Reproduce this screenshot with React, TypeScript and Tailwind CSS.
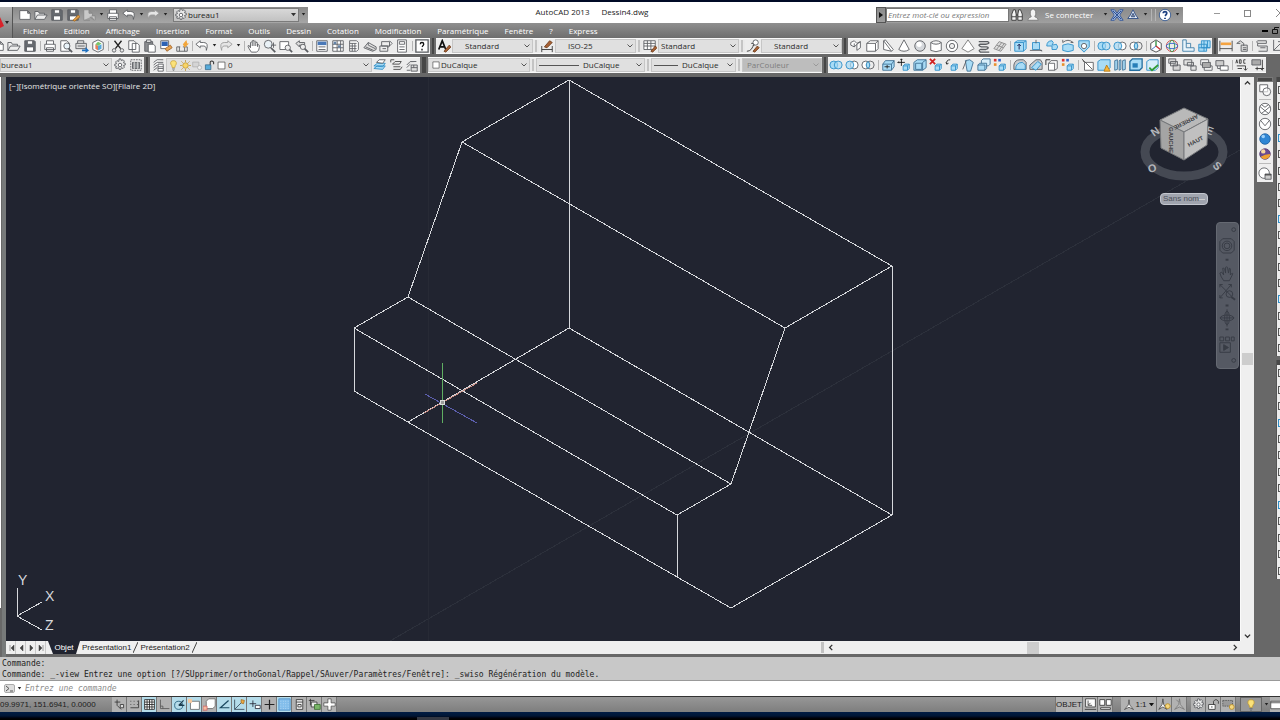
import { ReactNode } from "react";
import { clsx } from "clsx";

const INK = "#5a5d61";
const BLUE = "#2f8fc8";
const SKY = "#a9dcf6";

const miniCube = (
  <path d="M7 9l2-2h5v5l-2 2H7zM7 9h5v5M12 9l2-2" fill={SKY} stroke={BLUE} />
);

// Every glyph is drawn on a 16 x 16 grid
const glyphs: Record<string, ReactNode> = {
  new: <path d="M2 3h9l3 3v7H2zM11 3v3h3" fill="#fff" />,
  open: <path d="M1 13V4h4l1 2h6v2M1 13l3-5h11l-3 5z" fill="#eee" />,
  save: <><path d="M2 2h11l1 1v11H2z" fill="#666a70" /><path d="M5 2h6v4H5zM4 9h8v5H4z" fill="#fff" /></>,
  saveAs: <><path d="M2 2h11l1 1v11H2z" fill="#666a70" /><path d="M5 2h6v4H5zM4 9h8v5H4z" fill="#fff" /><path d="M8 14l6-6 2 2-6 5z" fill="#e2a04a" stroke="#a56a22" /></>,
  sheetOut: <path d="M2 14V2h6l4 4v3M2 14h7M8 2v4h4M9 10l5 4M11 9h4v5" fill="#c9c9c9" stroke="#888" />,
  print: <path d="M4 6V2h8v4M2 6h12v6H2zM4 10h8v4H4z" fill="#fff" />,
  preview: <><path d="M2 2h7l3 3v9H2z" fill="#fff" /><circle cx="9" cy="8" r="3.5" fill="#eaf4fa" /><path d="M11 11l4 4" strokeWidth="2" /></>,
  plot: <><path d="M3 5V2h7v3M1 5h12v6H1zM3 8h8" fill="#ddd" /><path d="M8 12h4v-3l4 4-4 3v-2H8z" fill="#1e70c0" stroke="none" /></>,
  print3d: <><path d="M2 4l6-3 6 3v8l-6 3-6-3z" fill="#fff" /><path d="M8 3l4 2-4 3-3-2z" fill="#7cc36a" stroke="none" /><path d="M5 6l3 2v5l-3-2z" fill="#e57f5a" stroke="none" /><path d="M12 6L8 8v5l4-2z" fill="#57a9dc" stroke="none" /></>,
  cut: <><path d="M4 2l7 9M12 2l-7 9" stroke="#222" strokeWidth="1.5" /><circle cx="3.500" cy="13" r="2" /><circle cx="12.500" cy="13" r="2" /></>,
  copy: <path d="M2 2h6l2 2v8H2zM6 5h6l2 2v8H6z" fill="#fff" />,
  paste: <><path d="M2 3h9v11H2z" fill="#8d8f92" /><path d="M4 1h5v3H4z" fill="#ddd" /><path d="M6 6h6l2 2v7H6z" fill="#fff" /></>,
  match: <><path d="M2 2h9v9H2z" fill="#fff" /><path d="M3 3h7v5H3z" fill="#2c62b4" stroke="none" /><path d="M7 11l6-4 2 3-6 4z" fill="#e8a552" stroke="#a4662c" /></>,
  block: <><path d="M2 9h4M9 9h5v5H2V9M5 9v5M11 9v5" /><path d="M9 6l4-5 1 4h2l-5 5z" fill="#f2a63b" stroke="none" /></>,
  undo: <path d="M6 2L1 6l5 4V8h4q3 0 3 5 3-9-3-9H6z" fill="#fff" />,
  redo: <path d="M10 2l5 4-5 4V8H6q-3 0-3 5-3-9 3-9h4z" fill="#e5e5e5" stroke="#9a9a9a" />,
  pan: <path d="M5 15q-3-4-4-7l1-1 2 3V4q1-1 2 0V2q1-1 2 0v1q1-2 2 0v1q2-1 2 1v2q2-1 2 0v3q0 3-3 5zM6 4v4M8 3v5M10 4v4M12 6v3" fill="#fff" />,
  zoom: <><circle cx="6" cy="6" r="4.500" fill="#eaf2f7" /><path d="M9 10l5 5" strokeWidth="2" /><path d="M12 4v6M9 7h6" /></>,
  zoomWin: <><path d="M1 3h10v9H1z" fill="#fff" /><circle cx="10" cy="10" r="3" fill="#eee" /><path d="M12 12l3 3" strokeWidth="2" /></>,
  zoomPrev: <><path d="M1 5l4-3v2h6v3H5v2z" fill="#ddd" /><circle cx="9" cy="9" r="3" fill="#eee" /><path d="M11 11l4 4" strokeWidth="2" /></>,
  props: <><path d="M2 2h12v12H2z" fill="#fff" /><path d="M3 3h10v4H3z" fill="#4a79b8" stroke="none" /><path d="M4 9h8M4 12h8" /></>,
  center: <><path d="M2 2h12v12H2z" fill="#fff" /><path d="M7 2v12M2 6h12M2 10h12M11 2v12" /><path d="M3 3h3v3H3zM8 7h3v3H8z" fill="#6584a8" stroke="none" /></>,
  palette: <path d="M3 2h8l2 2v8l-2 2H3zM3 5h8M6 5v9M9 5v9M3 8h8M3 11h8" fill="#fff" />,
  sheets: <path d="M1 10l5-6 9 5v3l-4 2zM3 9l9 4M6 4v3l8 4" fill="#ddd" />,
  markup: <path d="M3 3h9v5H3zM1 8h9v6H1zM12 2l3 3-5 5M4 11h4" fill="#eee" />,
  calc: <path d="M3 1h10v14H3zM5 3h6v3H5zM5 9h6M5 12h6" fill="#fff" />,
  help: <><path d="M1 1h14v14H1z" fill="#fff" strokeWidth="1.500" /><path d="M6 6q0-2 2-2t2 2q0 1-2 3M8 11v2" stroke="#111" strokeWidth="1.500" /></>,
  textStyle: <><path d="M2 12L6 2l4 10M4 9h4" stroke="#111" strokeWidth="2" /><path d="M8 14l6-7 2 2-6 6z" fill="#a86135" stroke="#70401f" /></>,
  dimStyle: <><path d="M2 8v7M14 8v7M2 12h12" stroke="#333" /><path d="M5 9l6-7 3 2-6 6z" fill="#a86135" stroke="#70401f" /></>,
  tableStyle: <><path d="M1 2h13v10H1zM1 5h13M1 8h13M5 2v10M9 2v10" fill="#fff" /><path d="M9 14l5-6 2 2-5 5z" fill="#a86135" stroke="#70401f" /></>,
  leader: <><path d="M1 14q6 0 8-9M6 5h3v3" stroke="#333" /><circle cx="11" cy="4" r="3" fill="#fff" /><path d="M8 14l5-6 2 2-5 5z" fill="#a86135" stroke="#70401f" /></>,
  polysolid: <path d="M2 4l4-2 3 3 4-2v7l-4 3V6L6 9 2 7zM6 9V5M9 6l4-3" fill="#fff" />,
  box: <path d="M2 5l4-3h9v9l-3 3H2zM2 5h10v9M12 5l3-3" fill="#fff" />,
  wedge: <path d="M3 2v10l9 2zM3 2l2-1 9 11-2 2" fill="#fff" />,
  cone: <path d="M8 1L2 12q6 4 12 0z" fill="#fff" />,
  sphere: <><circle cx="8" cy="8" r="6" fill="#d5d8dc" /><circle cx="7" cy="6" r="3" fill="#fff" stroke="none" /></>,
  cylinder: <path d="M2 4v9q6 3 12 0V4M2 4q6-4 12 0-6 4-12 0" fill="#fff" />,
  torus: <><circle cx="8" cy="8" r="6.500" fill="#fff" /><circle cx="8" cy="8" r="3" fill="#eee" /></>,
  pyramid: <path d="M8 1L1 11l7 4 7-4z" fill="#fff" stroke="#777" />,
  helix: <path d="M2 3h10q4 2-2 3H4q-4 1 1 3h6q4 1-1 3H4q-3 1 0 3h10" strokeWidth="1.500" />,
  plane: <path d="M1 11l6-8 8 3-6 8zM4 7l8 3M10 4l-6 8M13 5l-6 8" fill="#ddd" stroke="#888" />,
  pull: <><path d="M2 4l3-2h10v9l-3 3H2zM2 4h10v10M12 4l3-2" fill={SKY} stroke={BLUE} /><path d="M7 12V6M5 8l2-2 2 2" stroke="#114" /></>,
  extrude: <><path d="M4 4h8v8H4z" fill={SKY} stroke={BLUE} /><path d="M1 13h14M8 1v4M12 12l3 2" /></>,
  sweep: <path d="M2 8q0-6 6-6 3 2 0 5l5-1q3 3 0 6H8V8z" fill={SKY} stroke={BLUE} />,
  revolve: <><path d="M2 7q6-3 12 0v6q-6 3-12 0z" fill={SKY} stroke={BLUE} /><path d="M2 4q6-5 12 0M2 4V1M14 4h-3" /></>,
  loft: <><path d="M2 2h12v7l-6 6-6-6z" fill={SKY} stroke={BLUE} /><circle cx="8" cy="8" r="3" fill="#fff" /></>,
  union: <><circle cx="5.500" cy="8" r="4.500" fill={SKY} stroke={BLUE} /><circle cx="10.500" cy="8" r="4.500" fill={SKY} fillOpacity=".6" stroke={BLUE} /></>,
  subtract: <><circle cx="10.500" cy="8" r="4.500" fill="#fff" /><circle cx="5.500" cy="8" r="4.500" fill={SKY} fillOpacity=".7" stroke={BLUE} /></>,
  intersect: <><circle cx="5.500" cy="8" r="4.500" fill="#fff" /><circle cx="10.500" cy="8" r="4.500" /><path d="M8 4q4 4 0 8-4-4 0-8" fill={SKY} stroke={BLUE} /></>,
  gizmo: <><path d="M2 5l6-4 6 4v7l-6 3-6-3z" fill="#fff" stroke="#444" /><path d="M8 8V2" stroke="#2c8f3c" strokeWidth="1.500" /><path d="M8 8l-5 4" stroke="#2a66c8" /><path d="M8 8l5 4" stroke="#c62f2f" strokeWidth="1.500" /></>,
  globe: <><circle cx="8" cy="8" r="6.500" stroke="#c44" /><ellipse cx="8" cy="8" rx="3" ry="6.500" stroke="#3a9a4c" /><ellipse cx="8" cy="8" rx="6.500" ry="3" stroke="#36c" /></>,
  align: <path d="M2 1h4v9h9v4H2zM6 5h5v5" fill="#e7f4fb" stroke="#3f7da6" />,
  array: <path d="M5 2h10v8H5zM2 6h9v8H2zM8 2v12M2 10h13M12 2v8" fill={SKY} stroke={BLUE} />,
  dim: <><path d="M1 2v12M15 2v12M1 11h14" stroke="#444" /><path d="M2 4h12v3H2z" fill="#f4a340" stroke="none" /></>,
  tag: <path d="M2 5l4-3 4 3v3M2 5h4M7 7h7v7H7zM9 10h4M9 12h4" fill="#ddd" />,
  scroll: <path d="M3 2h10v3H3v3h11v6H4M6 10h6M3 2q-2 1 0 3" fill="#e5e5e5" />,
  axes: <path d="M3 1v12h12M3 13L13 3M8 3h5v5" />,
  faceMove: <>{miniCube}<path d="M5 1v8M1 5h8M4 2l1-1 1 1M2 4L1 5l1 1" stroke="#111" /></>,
  faceExtrude: <><path d="M2 7l3-4h10v7l-3 4H2zM2 7h10v7M12 7l3-4" fill={SKY} stroke="#3e6f92" /><path d="M4 10h6M7 8v4" stroke="#222" /></>,
  faceOffset: <path d="M1 5l4-3h10v9l-4 3H1zM3 6h7v7H3zM11 5l4-3M11 5v9" fill={SKY} stroke="#3e6f92" />,
  faceDelete: <>{miniCube}<path d="M1 1l6 6M7 1L1 7" stroke="#d02020" strokeWidth="2" /></>,
  faceRotate: <>{miniCube}<path d="M6 2Q1 2 2 7l2-1M2 7L1 5" stroke="#222" /></>,
  faceTaper: <><path d="M5 3l5-1 4 3-3 10H7z" fill={SKY} stroke="#3e6f92" /><path d="M2 13L6 3" /></>,
  faceCopy: <><path d="M5 3l2-2h8v6l-2 2H5z" fill="#d7eefa" stroke="#3e6f92" /><path d="M1 8l2-2h8v6l-2 2H1zM1 8h8v6" fill={SKY} stroke="#3e6f92" /></>,
  faceColor: <>{miniCube}<path d="M1 1h3v3H1z" fill="#d33" stroke="none" /><path d="M6 1h3v3H6z" fill="#36c" stroke="none" /><path d="M1 6h3v3H1z" fill="#e8902c" stroke="none" /></>,
  fillet: <><path d="M1 13V8q1-6 7-6h4l3 3v8z" fill="#c8ccd0" /><path d="M3 13q0-8 8-8l3 3v5z" fill={SKY} stroke={BLUE} /></>,
  chamfer: <><path d="M1 13V8l7-6h5l2 3v8z" fill="#c8ccd0" /><path d="M3 11l7-7 4 3-6 7z" fill={SKY} stroke={BLUE} /></>,
  edgeCopy: <><path d="M4 6l3-3h7v9l-3 2H4zM4 6h7v8" fill="#fff" /><path d="M1 2v6M1 2h5" stroke="#222" /></>,
  imprint: <><path d="M4 5h10v9H4z" fill="#fff" /><path d="M1 1l12 12M4 5l-2-2" stroke="#555" /></>,
  clean: <><path d="M1 4l3-2h11v9l-3 3H1z" fill={SKY} stroke={BLUE} /><path d="M11 8l4 7H8z" fill="#f7b53b" stroke="#b87a14" /></>,
  separate: <path d="M2 3l3-1v11l-3 1zM7 3l2-1v11l-2 1zM11 3l3-1v11l-3 1z" fill={SKY} stroke="#3e6f92" />,
  shell: <><path d="M1 4l3-3h11v10l-3 3H1z" fill={SKY} stroke="#256fa0" strokeWidth="1.500" /><path d="M4 6h6v5H4z" fill="#287fb8" stroke="none" /></>,
  check: <><path d="M2 4l3-2h10v9l-3 3H2z" fill="#d7eefa" stroke={BLUE} /><path d="M5 11l3 3 7-6" stroke="#2f9a35" strokeWidth="2" /></>,
  front: <path d="M2 1h8v5H2zM4 4h8v5H4zM7 8h8v6H7z" fill="#d6d6d6" />,
  back: <path d="M1 2h9v6H1zM5 5h7v4H5zM9 9h6v5H9z" fill="#e2e2e2" />,
  above: <><path d="M2 2h9v6H2zM6 9h9v5H6z" fill="#fff" /><path d="M4 5h9v6H4z" fill="#aaa" /></>,
  under: <><path d="M1 3h9v6H1z" fill="#ccc" /><path d="M6 9h9v5H6zM3 9v3h3" fill="#fff" /></>,
  letters: <path d="M1 6l1-4 1 4M5 2v4h2V2zM12 2h-2v4h2M2 9h10v5M10 12l2 2 2-2M3 12h5" stroke="#333" />,
  dimFront: <><path d="M1 2h10v6H1z" fill="#aaa" /><path d="M13 2v12M5 12h10M7 10v4M11 12l2 2" stroke="#333" /></>,
  gear: <><path d="M7 1h2l.5 2 2-1 1.500 1.500-1 2 2 .5v2l-2 .5 1 2-1.500 1.500-2-1-.5 2H7l-.5-2-2 1L3 11.500l1-2-2-.5V7l2-.5-1-2L4.500 3l2 1z" fill="#e8e8e8" /><circle cx="8" cy="8" r="2" fill="#fff" /></>,
  gearGrid: <><path d="M2 2h12v12H2z" strokeDasharray="2 1" /><path d="M4 5h8v7H4z" fill="#8a8d90" /><path d="M6 3v10M10 3v10" stroke="#ddd" /></>,
  layers: <path d="M3 5l4-3h7M3 8l4-3h7M3 11l4-3M3 14l4-3M8 7h6v8H8zM8 10h6M8 12h6" fill="#fff" />,
  layerSet: <><path d="M1 9l4-3h9l-3 4zM1 12l4-3h9l-3 4z" fill={SKY} stroke={BLUE} /><path d="M4 5l3-3h7l-3 4z" fill="#fff" /></>,
  layerPrev: <path d="M2 2h4M2 2v3M4 7l3-3h7l-2 3zM5 10h8M5 13h8l2-3" stroke="#444" fill="#eee" />,
  layerState: <path d="M2 8l4-4h7M2 11l4-4M2 14h4M7 8h7v7H7zM7 11h7M10 8v3" fill="#ddd" />,
  bulb: <><path d="M8 1q5 0 4 5-2 2-2 5H6q0-3-2-5-1-5 4-5z" fill="#fbe27a" stroke="#c39a2c" /><path d="M6 13h4M7 15h2" /></>,
  sun: <><circle cx="8" cy="8" r="4" fill="#f8d568" stroke="#b98c20" /><path d="M8 0v3M8 13v3M0 8h3M13 8h3M2 2l2 2M12 12l2 2M14 2l-2 2M4 12l-2 2" stroke="#b98c20" /></>,
  vpFreeze: <><path d="M1 3h9v7H1z" fill="#d5d5d5" stroke="#aaa" /><circle cx="11" cy="11" r="3" fill="#eee" stroke="#a8a8a8" /></>,
  unlock: <><path d="M2 7h8v7H2z" fill="#58abd9" stroke="#2c5f80" /><path d="M9 7V3q2-3 5 0v3" stroke="#333" strokeWidth="1.500" /></>,
  swatch: <path d="M3 3h10v10H3z" fill="#fff" stroke="#444" />,
  binoc: <path d="M2 14V7l2-5h2l1 5v7zM9 14V7l1-5h2l2 5v7zM7 8h2M2 10h5M9 10h5" fill="#f4f4f4" stroke="#333" />,
  user: <path d="M2 14q0-3 4-4Q4 7 5 4q1-3 3-3t3 3q1 3-1 6 4 1 4 4z" fill="#f2f2f2" stroke="#777" />,
  exchange: <><path d="M1 2h4l3 4 3-4h4l-4 6 4 6h-4l-3-4-3 4H1l4-6z" fill="#dce8f8" stroke="#234a94" /><path d="M3 3l10 10M13 3L3 13" stroke="#234a94" strokeWidth="1.500" /></>,
  a360: <path d="M8 2l3 6 3 4H2l3-4zM8 6l-2 4h4z" fill="#e5ecf6" stroke="#2c4c84" />,
  ask: <><circle cx="8" cy="8" r="6.500" fill="#fff" stroke="#31568e" /><path d="M6 6q0-2 2-2t2 2q0 1-2 3M8 11v1.500" stroke="#1b3f80" strokeWidth="2" /></>,
  hide: <><path d="M2 2h9v8H2z" fill="#fff" /><circle cx="10" cy="10" r="4.500" fill="#fff" fillOpacity=".6" /></>,
  wire: <><circle cx="8" cy="8" r="6.500" fill="#fff" /><path d="M2 5l6 5 6-5M4 13l4-3 4 3M4 3l4 3 4-3" /></>,
  hidden: <><circle cx="8" cy="8" r="6.500" fill="#fff" /><path d="M3 4l5 6 5-6" /></>,
  blueBall: <><circle cx="8" cy="8" r="6" fill="#2f86d4" stroke="#1f62a4" /><circle cx="6" cy="5" r="2" fill="#9bd0fa" stroke="none" /></>,
  goldBall: <><circle cx="8" cy="8" r="6" fill="#6a4a92" stroke="#53396f" /><path d="M3 11Q8 8 14 8q0 5-6 6-3 0-5-3z" fill="#f0a030" stroke="none" /><circle cx="6" cy="5" r="2.500" fill="#f6d6a0" stroke="none" /></>,
  styles: <><circle cx="7" cy="7" r="6" fill="#fff" /><path d="M8 8h7v6H8z" fill="#ccc" /><path d="M8 9h7" stroke="#222" /></>,
  infer: <path d="M5 2v7M2 5h7M9 8h4v4H9zM5 9l5 5" stroke="#333" fill="#ddd" />,
  snap: <path d="M3 4h1M7 4h1M11 4h1M3 8h1M7 8h1M11 8h1M3 12h10M13 3v9" stroke="#333" />,
  grid: <path d="M2 2h12v12H2zM5 2v12M8 2v12M11 2v12M2 5h12M2 8h12M2 11h12" stroke="#222" fill="#fff" />,
  ortho: <path d="M3 2v11h11M3 10h3v3" stroke="#555" />,
  polar: <><circle cx="7" cy="9" r="5" stroke="#1d5a78" /><path d="M7 9h7M7 9l6-6M9 6l2 3" stroke="#1d3d50" strokeWidth="1.500" /></>,
  osnap: <><path d="M3 4h11v10H3z" fill="#fff" stroke="#666" /><path d="M0 1h5v5H0z" fill="#f4c9a0" stroke="none" /></>,
  osnap3: <><path d="M4 4l3-3h8v9l-3 3H4z" fill="#fff" stroke="#666" /><path d="M0 10h5v5H0z" fill="#f4b9a0" stroke="#c66" /></>,
  otrack: <path d="M13 3L3 12h11" stroke="#1d4a60" strokeWidth="1.500" />,
  ducs: <><path d="M2 2v12h12M2 14l9-9" stroke="#345" /><path d="M10 2l4 1-1 4-3-1z" fill="#f3ad45" stroke="#a66e1e" /></>,
  dyn: <path d="M6 3v8M2 7h8M9 9h6v4H9z" stroke="#223" fill="#fff" />,
  lwt: <path d="M8 2v12M2 8h12" stroke="#222" strokeWidth="1.500" />,
  tpy: <><path d="M1 1h14v14H1z" fill="#82bdeb" stroke="#4f8fc4" /><path d="M3 4h10M3 7h10M3 10h10M3 13h10" stroke="#c6e2f8" strokeDasharray="1 2" /></>,
  qp: <path d="M4 2h8v12H4zM4 5h8M6 8h4v3H6z" fill="#eee" stroke="#333" />,
  sc: <><path d="M1 3h7M3 1v8M4 5h7v6H4z" stroke="#333" fill="#eee" /><path d="M8 8h7v6H8z" fill="#79b568" stroke="#3c6f33" /></>,
  am: <path d="M6 1h4v5h5v4h-5v5H6v-5H1V6h5z" fill="#fff" stroke="#555" />,
  model: <><path d="M2 1h12v10H2z" fill="#fff" stroke="#333" /><path d="M5 3v6h5M5 9l3-3M1 14h14" stroke="#333" /></>,
  views: <path d="M1 2h6v7H1zM9 2h6v7H9zM2 12h12v2H2z" fill="#fff" stroke="#333" />,
  scale: <path d="M8 1L7 8l-5 6 6-3 6 3-5-6z" fill="#fff" stroke="#444" />,
  scaleLit: <><path d="M6 1L5 8l-4 6 5-3 5 3-4-6z" fill="#fff" stroke="#444" /><circle cx="12" cy="10" r="3" fill="#f5d780" stroke="#b98c20" /></>,
  scaleOff: <path d="M8 1L7 8l-5 6 6-3 6 3-5-6zM4 2l3 3" fill="#bbb" stroke="#777" />,
  padlock: <><path d="M2 8h8v6H2z" fill="#fff" stroke="#333" /><path d="M8 8V4q3-4 6 0v3M6 10v2" stroke="#333" /></>,
  hardware: <><path d="M1 3h12v7H1z" fill="#999" stroke="#555" strokeDasharray="2 1" /><circle cx="12" cy="11" r="3" fill="#f5d780" stroke="#b98c20" /></>,
  tray: <path d="M1 3h14v10H1zM1 5h14" fill="#fff" stroke="#333" />,
};

const Glyph = ({ name, className = "size-3.5" }: { name: string; className?: string }) => (
  <svg viewBox="0 0 16 16" fill="none" stroke={INK} strokeWidth="1" className={clsx("shrink-0", className)} aria-hidden="true">
    {glyphs[name]}
  </svg>
);

const Tool = ({ name, className }: { name: string; className?: string }) => (
  <button aria-label={name} className={clsx("flex w-4 shrink-0 items-center justify-center overflow-hidden", className)}>
    <Glyph name={name} />
  </button>
);

const Caret = ({ className = "w-2" }: { className?: string }) => (
  <button aria-label="options" className={clsx("flex shrink-0 items-center justify-center", className)}>
    <svg viewBox="0 0 6 4" className="w-[5px]" aria-hidden="true"><path d="M1 0h4L3 3z" fill="#222" /></svg>
  </button>
);

// "|" is a divider, "v" is a small drop-down arrow
const Tools = ({ items }: { items: string }) => (
  <>
    {items.split(" ").map((item, i) =>
      item === "|" ? (
        <span key={i} className="flex w-1 shrink-0 justify-center py-0.5"><span className="w-px bg-[#b5b5b5]" /></span>
      ) : item === "v" ? (
        <Caret key={i} />
      ) : (
        <Tool key={i} name={item} />
      )
    )}
  </>
);

const Bar = ({ children }: { children: ReactNode }) => (
  <div className="flex h-4 shrink-0 items-stretch border-y border-[#fafafa] bg-[#ececec]">{children}</div>
);

const Grip = ({ className = "w-1.5" }: { className?: string }) => (
  <span className={clsx("shrink-0 border-x-2 border-[#6c6c6c] bg-[#464646]", className)} />
);

const Rule = () => <span className="my-px w-1.5 shrink-0 border-x-2 border-[#e9e9e9] bg-[#c4c4c4]" />;

interface ComboProps {
  label: string;
  value: string;
  className: string;
  pad?: string;
  lead?: ReactNode;
  disabled?: boolean;
}

function Combo({ label, value, className, pad = "pl-1", lead, disabled }: ComboProps) {
  return (
    <label
      className={clsx(
        "relative flex shrink-0 items-center border border-[#c6c6c6]",
        disabled ? "bg-[#bdbdbd] text-[#7d7d7d]" : "bg-[#e0e0e0] text-[#2b2b2b]",
        pad,
        className
      )}
    >
      {lead}
      <select aria-label={label} disabled={disabled} className="w-full min-w-0 flex-1 appearance-none bg-transparent opacity-100 outline-none">
        <option>{value}</option>
      </select>
      <svg viewBox="0 0 6 4" className="pointer-events-none absolute right-0.5 w-1.5" fill="none" stroke={disabled ? "#999" : "#555"} aria-hidden="true">
        <path d="M.5.5L3 3 5.500.5" />
      </svg>
    </label>
  );
}

const menus = ["Fichier", "Edition", "Affichage", "Insertion", "Format", "Outils", "Dessin", "Cotation", "Modification", "Paramétrique", "Fenêtre", "?", "Express"];

function Header() {
  return (
    <header className="flex shrink-0 bg-white">
      <button aria-label="Application" className="mt-[5px] flex w-[13px] shrink-0 items-center justify-between border-r border-[#555] bg-gradient-to-b from-[#b4b4b4] to-[#7b7b7b]">
        <svg viewBox="0 0 4 12" className="h-3 w-1" aria-hidden="true"><path d="M0 0l4 9-4 2z" fill="#d9222a" /></svg>
        <svg viewBox="0 0 6 4" className="mr-0.5 w-1.5" aria-hidden="true"><path d="M1 0h4L3 3z" fill="#222" /></svg>
      </button>
      <div className="min-w-0 flex-1">
        <div className="flex h-[21px] items-stretch overflow-hidden pt-[5px]">
          <div className="flex w-[295px] shrink-0 items-stretch bg-gradient-to-b from-[#8a8a8a] to-[#a6a6a6] pl-1">
            <Tools items="new open save saveAs sheetOut v" />
            <Tools items="print undo v redo v" />
            <label className="relative my-px ml-1 flex w-[126px] items-center border border-[#7b7b7b] bg-gradient-to-b from-[#d8d8d8] to-[#c2c2c2] text-[#222]">
              <Glyph name="gear" />
              <select aria-label="Espace de travail" className="min-w-0 flex-1 appearance-none bg-transparent outline-none"><option>bureau1</option></select>
              <svg viewBox="0 0 6 4" className="pointer-events-none absolute right-0.5 w-[5px]" aria-hidden="true"><path d="M0 0h6L3 4z" fill="#333" /></svg>
            </label>
            <Caret className="flex-1" />
          </div>
          <h1 className="flex flex-1 items-center justify-center gap-3 pb-1.5 text-[#222]">
            <span>AutoCAD 2013</span>
            <span>Dessin4.dwg</span>
          </h1>
          <div className="flex w-[404px] shrink-0 items-stretch">
            <div className="flex w-[307px] items-stretch bg-gradient-to-b from-[#8a8a8a] to-[#9f9f9f]">
              <button aria-label="Réduire" className="flex w-[10px] items-center justify-center border border-[#555]">
                <svg viewBox="0 0 4 6" className="h-1.5" aria-hidden="true"><path d="M0 0l4 3-4 3z" fill="#111" /></svg>
              </button>
              <input aria-label="Rechercher" placeholder="Entrez mot-clé ou expression" className="my-px w-[123px] border border-[#777] bg-white px-px italic outline-none placeholder:text-[#777]" />
              <Tools items="binoc user" />
              <button className="pl-1 text-white">Se connecter</button>
              <span className="flex-1" />
              <Caret />
              <Tools items="exchange a360 v | | ask v" />
              <span className="w-0.5" />
            </div>
            <div className="flex flex-1 items-start justify-end text-[#888]">
              <button aria-label="Minimiser" className="flex h-3 w-[31px] items-center justify-center"><span className="h-px w-1.5 bg-[#999]" /></button>
              <button aria-label="Agrandir" className="flex h-3 w-[31px] items-center justify-center"><span className="size-[7px] border border-[#888]" /></button>
              <button aria-label="Fermer" className="flex h-3 w-[17px] items-center justify-end"><svg viewBox="0 0 5 8" className="h-2 w-[5px]" fill="none" stroke="#888" aria-hidden="true"><path d="M1 0l4 4-4 4" /></svg></button>
            </div>
          </div>
        </div>
        <nav className="flex h-[15px] items-center bg-gradient-to-b from-[#8f8f8f] to-[#6e6e6e] pl-0.5 text-white">
          {menus.map((m) => (
            <button key={m} className="px-2">{m}</button>
          ))}
          <span className="flex-1" />
          <button aria-label="Minimiser le dessin" className="mr-1 h-0.5 w-1.5 bg-black" />
          <button aria-label="Restaurer le dessin" className="mr-px">
            <svg viewBox="0 0 7 7" className="size-[7px]" fill="none" stroke="#111" aria-hidden="true"><path d="M2.500 2V.5H7M.5 2.500h5v4h-5z" /></svg>
          </button>
        </nav>
      </div>
    </header>
  );
}

function Toolbars() {
  return (
    <div className="flex shrink-0 flex-col gap-[3px] overflow-hidden bg-[#686868] pb-1">
      <div className="flex">
        <Bar>
          <span className="flex w-1.5 shrink-0 justify-end overflow-hidden"><Tool name="new" /></span>
          <Tools items="open save | print preview plot print3d | cut copy paste match block | undo v redo v | pan zoom zoomWin zoomPrev | props center palette sheets markup calc | help" />
        </Bar>
        <Grip />
        <Bar>
          <Tool name="textStyle" />
          <Combo label="Style de texte" value="Standard" className="w-[81px]" pad="pl-3" />
          <Rule />
          <Tool name="dimStyle" />
          <Combo label="Style de cote" value="ISO-25" className="w-[81px]" pad="pl-3" />
          <Rule />
          <Tool name="tableStyle" />
          <Combo label="Style de tableau" value="Standard" className="w-[81px]" pad="pl-0.5" />
          <Rule />
          <Tool name="leader" />
          <Combo label="Style de ligne de repère" value="Standard" className="w-[81px]" pad="pl-3" />
        </Bar>
        <Grip />
        <Bar>
          <Tools items="polysolid box wedge cone sphere cylinder torus pyramid helix plane | pull extrude sweep revolve loft | union subtract intersect | gizmo globe align array" />
        </Bar>
        <Grip />
        <Bar>
          <Tools items="dim tag | scroll axes" />
        </Bar>
      </div>
      <div className="flex">
        <Bar>
          <Combo label="Espace" value="bureau1" className="w-28" pad="pl-0" />
          <Tools items="gear gearGrid" />
        </Bar>
        <Grip />
        <Bar>
          <Tool name="layers" />
          <Combo
            label="Calque"
            value="0"
            className="w-[206px]"
            pad="pl-px"
            lead={["bulb", "sun", "vpFreeze", "unlock", "swatch"].map((n) => <Glyph key={n} name={n} className="mr-px size-[11px]" />)}
          />
          <Tools items="layerSet layerPrev layerState" />
        </Bar>
        <Grip className="w-2" />
        <Bar>
          <Combo label="Couleur" value="DuCalque" className="w-[102px]" pad="pl-0.5" lead={<Glyph name="swatch" className="size-[10px]" />} />
          <Rule />
          <Combo label="Type de ligne" value="DuCalque" className="w-[109px]" pad="pl-0.5" lead={<span className="mr-1 h-px w-10 shrink-0 bg-[#555]" />} />
          <Rule />
          <Combo label="Epaisseur de ligne" value="DuCalque" className="w-[85px]" pad="pl-0.5" lead={<span className="mr-1 h-px w-6 shrink-0 bg-[#555]" />} />
          <Rule />
          <Combo label="Style de tracé" value="ParCouleur" className="w-20" disabled />
        </Bar>
        <Grip />
        <Bar>
          <Tools items="union subtract intersect | faceExtrude faceMove faceOffset faceDelete faceRotate faceTaper faceCopy faceColor | fillet chamfer edgeCopy faceColor | imprint clean separate shell check" />
        </Bar>
        <Grip />
        <Bar>
          <Tools items="front back above under | letters dimFront" />
        </Bar>
      </div>
    </div>
  );
}

function Model() {
  return (
    <svg className="absolute inset-0 size-full" fill="none" shapeRendering="crispEdges" aria-hidden="true">
      <path d="M1234 73L384 564" stroke="#2c303b" />
      <path d="M422.500 0v564" stroke="#272a35" />
      <g stroke="#d6d8dc">
        <path d="M563 3L456 65 402 220l-54 31v63l377 217 161-93V189z" />
        <path d="M456 65l323 186 107-62M779 251l-54 156-54 31v62M402 220l323 187M348 251l323 187" />
        <path d="M563.500 3v248M402 345l161-94 323 187" />
      </g>
      <path d="M418 336l53-30" stroke="#c98f86" />
      <path d="M419 317l52 29" stroke="#5c5fae" />
      <path d="M436.500 286v60" stroke="#5fae62" />
      <path d="M434.500 323.500h4v4h-4z" fill="#9a9a9a" stroke="#ddd" />
      <path d="M11.500 511v28M11 539l25-14M11 539l25 14" stroke="#d6d8dc" />
      <g fill="#d6d8dc" className="font-['Liberation_Sans'] text-[14px]">
        <text x="12" y="508">Y</text>
        <text x="39" y="524">X</text>
        <text x="39" y="553">Z</text>
      </g>
    </svg>
  );
}

function ViewCube() {
  return (
    <svg viewBox="0 0 92 76" className="absolute top-7 right-2.5 h-[76px] w-[92px]" aria-hidden="true">
      <ellipse cx="46" cy="47" rx="39" ry="24" fill="none" stroke="#454953" strokeWidth="9" />
      <g fill="#b4b6bb" className="font-['Liberation_Sans'] text-[11px] font-bold">
        <text transform="translate(11 68) rotate(-15)">O</text>
        <text transform="translate(74 61) rotate(45)">S</text>
        <text transform="translate(16 32) rotate(-35)">N</text>
        <text transform="translate(67 28) rotate(20)">E</text>
      </g>
      <g stroke="#77797c">
        <path d="M46 3l24 11-24 13L22 15z" fill="#b9b9b9" />
        <path d="M22 15l24 12v28L23 43z" fill="#a4a4a4" />
        <path d="M70 14L46 27v28l23-15z" fill="#c0c0c0" />
      </g>
      <g fill="#3f4145" className="font-['Liberation_Sans'] text-[6px] font-bold">
        <text transform="translate(59 9) rotate(153)">ARRIERE</text>
        <text transform="translate(31 22) rotate(90)">GAUCHE</text>
        <text transform="translate(51 42) rotate(-27)">HAUT</text>
      </g>
    </svg>
  );
}

function NavBar() {
  return (
    <div className="absolute top-[145px] right-px w-[23px] rounded-sm border border-[#656972] bg-[#555963]">
      <svg viewBox="0 0 22 145" className="h-[145px] w-full" fill="none" stroke="#383c45" aria-hidden="true">
        <circle cx="17.500" cy="3.500" r="2" />
        <path d="M6 13h9l3 3v9l-3 3H6l-3-3v-9z" />
        <circle cx="10.500" cy="20.500" r="5" /><circle cx="10.500" cy="20.500" r="3" />
        <path d="M9 35h3M9 83h3M9 108h3" strokeWidth="2" />
        <path d="M7 57q-3-4-4-8l2-1 2 3-1-7q1-1 2 1l1 4V43q1-1 2 0l1 6 1-5q1 0 1 1v6l2-2q1 0 0 2l-3 6z" />
        <path d="M3 61l12 12M15 61L3 75M3 64v-3h3M15 64v-3h-3M3 72v3h3" />
        <circle cx="13" cy="71" r="3.500" /><path d="M15 74l4 3" strokeWidth="2" />
        <ellipse cx="10.500" cy="96" rx="7" ry="3" /><ellipse cx="10.500" cy="96" rx="2.500" ry="7" /><path d="M10.500 87v18M3 96h15" />
        <path d="M3 116h4v4H3zM9 116h4v4H9zM15 116h3v4h-3zM3 122h11v10H3z" /><path d="M7 124v6l5-3z" fill="#383c45" />
        <circle cx="17.500" cy="140.500" r="2" />
      </svg>
    </div>
  );
}

const Chevron = ({ d, label }: { d: string; label: string }) => (
  <button aria-label={label} className="flex h-3 w-3 shrink-0 items-center justify-center">
    <svg viewBox="0 0 8 8" className="size-[7px]" fill="none" stroke="#333" strokeWidth="1.500" aria-hidden="true"><path d={d} /></svg>
  </button>
);

function SheetTabs() {
  return (
    <div className="flex h-[13px] shrink-0 items-stretch bg-[#efefef] font-['Liberation_Sans'] text-[8px] text-[#222]">
      <div className="flex w-[815px] shrink items-stretch">
        {["M3 1v6M7 1L4 4l3 3z", "M6 1L3 4l3 3z", "M3 1l3 3-3 3z", "M6 1v6M2 1l3 3-3 3z"].map((d) => (
          <button key={d} aria-label="onglets" className="flex w-[10px] items-center justify-center border-r border-[#c9c9c9]">
            <svg viewBox="0 0 8 8" className="size-2" fill="#444" stroke="#444" strokeWidth=".5" aria-hidden="true"><path d={d} /></svg>
          </button>
        ))}
        <button className="relative ml-0.5 flex w-8 items-center justify-center text-white">
          <svg viewBox="0 0 32 13" preserveAspectRatio="none" className="absolute inset-0 size-full" aria-hidden="true"><path d="M0 0h32l-4 13H5z" fill="#212430" /></svg>
          <span className="relative">Objet</span>
        </button>
        {["Présentation1", "Présentation2"].map((t) => (
          <button key={t} className="flex items-center gap-0.5 pl-0.5">
            {t}
            <svg viewBox="0 0 5 11" className="h-[11px] w-[5px]" stroke="#444" aria-hidden="true"><path d="M0 11L5 0" /></svg>
          </button>
        ))}
      </div>
      <span className="my-px w-[3px] bg-[#c2c2c2]" />
      <Chevron label="gauche" d="M6 1L3 4l3 3" />
      <div className="flex flex-1 justify-center pt-px"><span className="w-3 bg-[#cdcdcd]" /></div>
      <Chevron label="droite" d="M2 1l3 3-3 3" />
      <span className="w-[13px]" />
    </div>
  );
}

// Tool strip cut off by the window edge
const EdgeStrip = ({ count, className }: { count: number; className?: string }) => (
  <div className={clsx("flex flex-col border-l border-[#555] bg-[#ececec]", className)}>
    <span className="h-[5px] bg-[#484848]" />
    <div className="flex flex-1 flex-col items-end justify-around">
      {Array.from({ length: count }, (_, i) => (
        <span key={i} className={clsx("h-2 w-0.5 border-y border-l", i % 5 === 3 ? "border-[#2f8fc8]" : "border-[#555]")} />
      ))}
    </div>
  </div>
);

function Workspace() {
  return (
    <main className="flex min-h-0 flex-1 bg-[#686868]">
      <div className="mr-px mb-[49px] w-px bg-white" />
      <div className="flex min-w-0 flex-1 flex-col border-l-4 border-[#777a7a] pb-[3px]">
        <div className="flex min-h-0 flex-1">
          <section aria-label="Dessin" className="relative min-w-0 flex-1 overflow-hidden bg-[#212430]">
            <Model />
            <div className="absolute top-[3px] left-[3px] text-[#e8e8e8]">[−][Isométrique orientée SO][Filaire 2D]</div>
            <ViewCube />
            <button className="absolute top-[116px] right-8 flex h-3 w-12 items-center justify-between rounded-sm border border-[#c3c6ce] bg-[#a0a4ae] px-0.5 font-['Liberation_Sans'] text-[8px] whitespace-nowrap text-[#4c505a]">
              Sans nom <span className="h-px w-1.5 bg-[#ccc]" />
            </button>
            <NavBar />
          </section>
          <div className="flex w-[14px] shrink-0 flex-col items-center border-l border-[#fafafa] bg-[#efefef]">
            <Chevron label="haut" d="M1 5l3-3 3 3" />
            <div className="flex flex-1 items-center"><span className="h-3 w-[11px] bg-[#cdcdcd]" /></div>
            <Chevron label="bas" d="M1 3l3 3 3-3" />
          </div>
        </div>
        <SheetTabs />
      </div>
      <div className="ml-[3px] flex w-4 shrink-0 flex-col self-start bg-[#efefef]">
        <span className="h-[5px] border border-[#777] bg-[#484848]" />
        <Tool name="hide" className="h-4" />
        <span className="mx-0.5 my-px h-px bg-[#bbb]" />
        {["wire", "hidden", "blueBall", "goldBall"].map((n) => <Tool key={n} name={n} className="h-[15px]" />)}
        <span className="mx-0.5 my-0.5 h-px bg-[#bbb]" />
        <Tool name="styles" className="h-4" />
      </div>
      <div className="ml-[3px] flex w-1 shrink-0 flex-col gap-1">
        <EdgeStrip count={17} className="h-[279px]" />
        <EdgeStrip count={13} className="h-[219px]" />
      </div>
    </main>
  );
}

function CommandLine() {
  return (
    <section className="shrink-0 font-['DejaVu_Sans_Mono'] text-[8px]">
      <div className="border-b border-[#999] bg-[#c8c8c8] pt-px pl-0.5 leading-[11px] whitespace-nowrap text-[#222]">
        <p>Commande:</p>
        <p>Commande: _-view Entrez une option [?/SUpprimer/orthoGonal/Rappel/SAuver/Paramètres/Fenêtre]: _swiso Régénération du modèle.</p>
      </div>
      <div className="flex h-[15px] items-center bg-white pl-1">
        <button aria-label="Historique" className="flex h-[9px] w-[11px] items-center rounded-xs border border-[#aaa] bg-[#ddd]">
          <svg viewBox="0 0 9 7" fill="none" stroke="#555" aria-hidden="true"><path d="M1 1l3 2.500L1 6M5 6h3" /></svg>
        </button>
        <Caret />
        <input aria-label="Commande" placeholder="Entrez une commande" className="ml-0.5 flex-1 bg-transparent italic outline-none placeholder:text-[#8c8c8c]" />
      </div>
    </section>
  );
}

const modes = ["infer", "snap", "grid", "ortho", "polar", "osnap", "osnap3", "otrack", "ducs", "dyn", "lwt", "tpy", "qp", "sc", "am"];
const activeModes = ["grid", "polar", "osnap", "otrack", "ducs", "dyn", "tpy"];

const StatusButton = ({ name, active }: { name: string; active?: boolean }) => (
  <button aria-label={name} className={clsx("flex w-[15px] shrink-0 items-center justify-center border-r border-[#777]", active ? "bg-[#b5dcea]" : "bg-[#b2b2b2]")}>
    <Glyph name={name} className="size-[13px]" />
  </button>
);

function StatusBar() {
  return (
    <footer className="flex h-4 shrink-0 items-stretch overflow-hidden border-t border-[#333] bg-gradient-to-b from-[#979797] to-[#7e7e7e] font-['Liberation_Sans'] text-[8px] text-[#1c1c1c]">
      <div className="flex w-28 shrink-0 items-center whitespace-nowrap">09.9971, 151.6941, 0.0000</div>
      {modes.map((m) => <StatusButton key={m} name={m} active={activeModes.includes(m)} />)}
      <span className="flex-1" />
      <button className="w-7 border-x border-[#777] bg-[#b2b2b2]">OBJET</button>
      <StatusButton name="model" />
      <StatusButton name="views" />
      <span className="w-2" />
      <button className="flex w-9 items-center justify-center border-r border-[#777] bg-[#b2b2b2]">
        <Glyph name="scale" className="size-3" />1:1
        <svg viewBox="0 0 6 4" className="ml-0.5 w-[5px]" aria-hidden="true"><path d="M0 0h6L3 4z" fill="#111" /></svg>
      </button>
      <StatusButton name="scaleLit" />
      <StatusButton name="scaleOff" />
      <span className="w-1" />
      <StatusButton name="gear" />
      <StatusButton name="padlock" />
      <StatusButton name="hardware" />
      <span className="w-1" />
      <button aria-label="Isoler" className="flex w-[22px] items-center justify-center border border-[#666] bg-[#999]"><Glyph name="bulb" className="size-3" /></button>
      <Caret />
      <button aria-label="Nettoyer l'écran" className="w-[10px] overflow-hidden bg-[#b2b2b2]"><Glyph name="tray" className="size-3" /></button>
    </footer>
  );
}

export default function App() {
  return (
    <div className="flex h-screen flex-col overflow-hidden bg-[#000a26] pt-0.5 font-['Open_Sans',sans-serif] text-[8px] leading-3">
      <Header />
      <Toolbars />
      <Workspace />
      <CommandLine />
      <StatusBar />
      <div className="flex h-2 shrink-0 items-end bg-gradient-to-b from-[#001b44] via-[#001534] to-black">
        <span className="ml-[417px] h-[3px] w-8 bg-[#343843]" />
      </div>
    </div>
  );
}
